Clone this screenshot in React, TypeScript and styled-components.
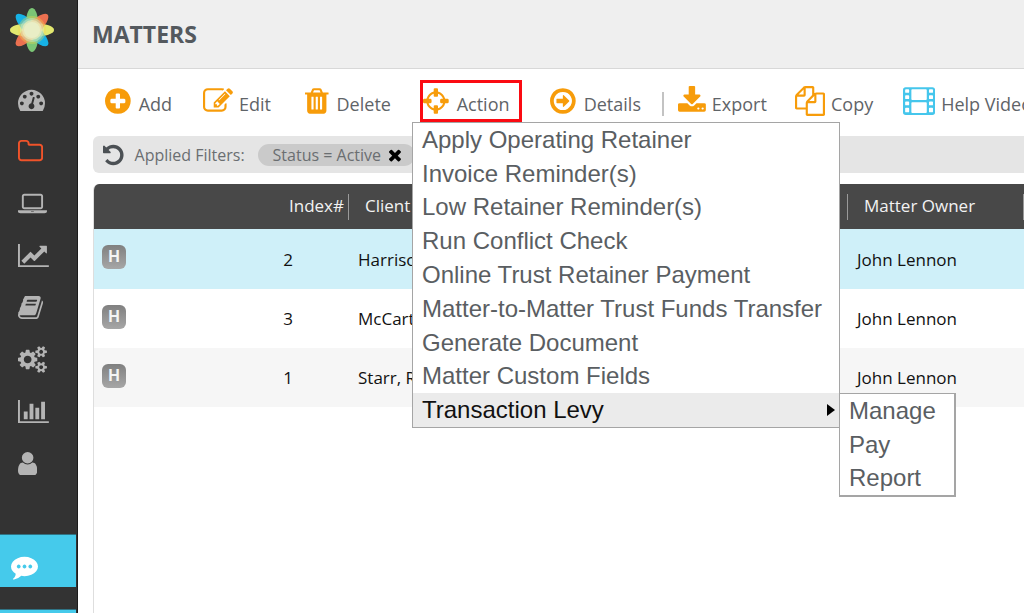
import React from "react";
import styled, { createGlobalStyle } from "styled-components";

const uiFont = `"Open Sans", "Noto Sans", sans-serif`;
const menuFont = `"Liberation Sans", Arial, sans-serif`;

const GlobalStyle = createGlobalStyle`
  *, *::before, *::after { box-sizing: border-box; }
  body { margin: 0; background: #fff; font-family: ${uiFont}; color: #111; overflow: hidden; }
  button { font: inherit; color: inherit; background: none; border: 0; padding: 0; margin: 0; cursor: pointer; }
  ul { list-style: none; margin: 0; padding: 0; }
`;

const GLYPHS = {
  dashboard: {
    box: "0 0 1792 1792",
    d: "M384 1152q0-53-37.5-90.5t-90.5-37.5-90.5 37.5-37.5 90.5 37.5 90.5 90.5 37.5 90.5-37.5 37.5-90.5zm192-448q0-53-37.5-90.5t-90.5-37.5-90.5 37.5-37.5 90.5 37.5 90.5 90.5 37.5 90.5-37.5 37.5-90.5zm428 481l101-382q6-26-7.5-48.5t-38.5-29.5-48 6.5-30 39.5l-101 382q-60 5-107 43.5t-63 98.5q-20 77 20 146t117 89 146-20 89-117q16-60-6-117t-72-91zm660-33q0-53-37.5-90.5t-90.5-37.5-90.5 37.5-37.5 90.5 37.5 90.5 90.5 37.5 90.5-37.5 37.5-90.5zm-640-640q0-53-37.5-90.5t-90.5-37.5-90.5 37.5-37.5 90.5 37.5 90.5 90.5 37.5 90.5-37.5 37.5-90.5zm448 192q0-53-37.5-90.5t-90.5-37.5-90.5 37.5-37.5 90.5 37.5 90.5 90.5 37.5 90.5-37.5 37.5-90.5zm320 448q0 261-141 483-19 29-54 29h-1402q-35 0-54-29-141-221-141-483 0-182 71-348t191-286 286-191 348-71 348 71 286 191 191 286 71 348z",
  },
  folder: {
    box: "64 0 1664 1792",
    d: "M1600 1312v-704q0-40-28-68t-68-28h-704q-40 0-68-28t-28-68v-64q0-40-28-68t-68-28h-320q-40 0-68 28t-28 68v960q0 40 28 68t68 28h1216q40 0 68-28t28-68zm128-704v704q0 92-66 158t-158 66h-1216q-92 0-158-66t-66-158v-960q0-92 66-158t158-66h320q92 0 158 66t66 158v32h672q92 0 158 66t66 158z",
  },
  laptop: {
    box: "0 0 1920 1792",
    d: "M416 1280q-66 0-113-47t-47-113v-704q0-66 47-113t113-47h1088q66 0 113 47t47 113v704q0 66-47 113t-113 47h-1088zm-32-864v704q0 13 9.5 22.5t22.5 9.5h1088q13 0 22.5-9.5t9.5-22.5v-704q0-13-9.5-22.5t-22.5-9.5h-1088q-13 0-22.5 9.5t-9.5 22.5zm1376 928h160v96q0 40-47 68t-113 28h-1600q-66 0-113-28t-47-68v-96h1760zm-720 96q16 0 16-16t-16-16h-160q-16 0-16 16t16 16h160z",
  },
  line: {
    box: "0 0 2048 1792",
    d: "M2048 1536v128h-2048v-1536h128v1408h1920zm-128-1248v435q0 21-19.5 29.5t-35.5-7.5l-121-121-633 633q-10 10-23 10t-23-10l-233-233-416 416-192-192 585-585q10-10 23-10t23 10l233 233 464-464-121-121q-16-16-7.5-35.5t29.5-19.5h435q14 0 23 9t9 23z",
  },
  book: {
    box: "64 0 1664 1792",
    d: "M1703 478q40 57 18 129l-275 906q-19 64-76.5 107.5t-122.5 43.5h-923q-77 0-148.5-53.5t-99.5-131.5q-24-67-2-127 0-4 3-27t4-37q1-8-3-21.5t-3-19.5q2-11 8-21t16.5-23.5 16.5-23.5q23-38 45-91.5t30-91.5q3-10 .5-30t-.5-28q3-11 17-28t17-23q21-36 42-92t25-90q1-9-2.5-32t.5-28q4-13 22-30.5t22-22.5q19-26 42.5-84.5t27.5-96.5q1-8-3-25.5t-2-26.5q2-8 9-18t18-23 17-21q8-12 16.5-30.5t15-35 16-36 19.5-32 26.5-23.5 36-11.5 47.5 5.5l-1 3q38-9 51-9h761q74 0 114 56t18 130l-274 906q-36 119-71.5 153.5t-128.5 34.5h-869q-27 0-38 15-11 16-1 43 24 70 144 70h923q29 0 56-15.5t35-41.5l300-987q7-22 5-57 38 15 59 43zm-1064 2q-4 13 2 22.5t20 9.5h608q13 0 25.5-9.5t16.5-22.5l21-64q4-13-2-22.5t-20-9.5h-608q-13 0-25.5 9.5t-16.5 22.5zm-83 256q-4 13 2 22.5t20 9.5h608q13 0 25.5-9.5t16.5-22.5l21-64q4-13-2-22.5t-20-9.5h-608q-13 0-25.5 9.5t-16.5 22.5z",
  },
  cogs: {
    box: "0 0 1920 1792",
    d: "M896 896q0-106-75-181t-181-75-181 75-75 181 75 181 181 75 181-75 75-181zm768 512q0-52-38-90t-90-38-90 38-38 90q0 53 37.5 90.5t90.5 37.5 90.5-37.5 37.5-90.5zm0-1024q0-52-38-90t-90-38-90 38-38 90q0 53 37.5 90.5t90.5 37.5 90.5-37.5 37.5-90.5zm-384 421v185q0 10-7 19.5t-16 10.5l-155 24q-11 35-32 76 34 48 90 115 7 11 7 20 0 12-7 19-23 30-82.5 89.5t-78.5 59.5q-11 0-21-7l-115-90q-37 19-77 31-11 108-23 155-7 24-30 24h-186q-11 0-20-7.5t-10-17.5l-23-153q-34-10-75-31l-118 89q-7 7-20 7-11 0-21-8-144-133-144-160 0-9 7-19 10-14 41-53t47-61q-23-44-35-82l-152-24q-10-1-17-9.5t-7-19.5v-185q0-10 7-19.5t16-10.5l155-24q11-35 32-76-34-48-90-115-7-11-7-20 0-12 7-20 22-30 82-89t79-59q11 0 21 7l115 90q34-18 77-32 11-108 23-154 7-24 30-24h186q11 0 20 7.5t10 17.5l23 153q34 10 75 31l118-89q8-7 20-7 11 0 21 8 144 133 144 160 0 9-7 19-12 16-42 54t-45 60q23 48 34 82l152 23q10 2 17 10.5t7 19.5zm640 533v140q0 16-149 31-12 27-30 52 51 113 51 138 0 4-4 7-122 71-124 71-8 0-46-47t-52-68q-20 2-30 2t-30-2q-14 21-52 68t-46 47q-2 0-124-71-4-3-4-7 0-25 51-138-18-25-30-52-149-15-149-31v-140q0-16 149-31 13-29 30-52-51-113-51-138 0-4 4-7 4-2 35-20t59-34 30-16q8 0 46 46.5t52 67.5q20-2 30-2t30 2q51-71 92-112l6-2q4 0 124 70 4 3 4 7 0 25-51 138 17 23 30 52 149 15 149 31zm0-1024v140q0 16-149 31-12 27-30 52 51 113 51 138 0 4-4 7-122 71-124 71-8 0-46-47t-52-68q-20 2-30 2t-30-2q-14 21-52 68t-46 47q-2 0-124-71-4-3-4-7 0-25 51-138-18-25-30-52-149-15-149-31v-140q0-16 149-31 13-29 30-52-51-113-51-138 0-4 4-7 4-2 35-20t59-34 30-16q8 0 46 46.5t52 67.5q20-2 30-2t30 2q51-71 92-112l6-2q4 0 124 70 4 3 4 7 0 25-51 138 17 23 30 52 149 15 149 31z",
  },
  bars: {
    box: "0 0 2048 1792",
    d: "M640 896v512h-256v-512h256zm384-512v1024h-256v-1024h256zm1024 1152v128h-2048v-1536h128v1408h1920zm-640-896v768h-256v-768h256zm384-384v1152h-256v-1152h256z",
  },
  user: {
    box: "256 0 1280 1792",
    d: "M1536 1399q0 109-62.5 187t-150.5 78h-854q-88 0-150.5-78t-62.5-187q0-85 8.5-160.5t31.5-152 58.5-131 94-89 134.5-34.5q131 128 313 128t313-128q76 0 134.5 34.5t94 89 58.5 131 31.5 152 8.5 160.5zm-256-887q0 159-112.5 271.5t-271.5 112.5-271.5-112.5-112.5-271.5 112.5-271.5 271.5-112.5 271.5 112.5 112.5 271.5z",
  },
  chat: {
    box: "0 0 1792 1792",
    d: "M640 896q0-53-37.5-90.5t-90.5-37.5-90.5 37.5-37.5 90.5 37.5 90.5 90.5 37.5 90.5-37.5 37.5-90.5zm384 0q0-53-37.5-90.5t-90.5-37.5-90.5 37.5-37.5 90.5 37.5 90.5 90.5 37.5 90.5-37.5 37.5-90.5zm384 0q0-53-37.5-90.5t-90.5-37.5-90.5 37.5-37.5 90.5 37.5 90.5 90.5 37.5 90.5-37.5 37.5-90.5zm384 0q0 174-120 321.5t-326 233-450 85.5q-110 0-211-18-173 173-435 229-52 10-86 13-12 1-22-6t-13-18q-4-15 20-37 5-5 23.5-21.5t25.5-23.5 23.5-25.5 24-31.5 20.5-37 20-48 14.5-57.5 12.5-72.5q-146-90-229.5-216.5t-83.5-269.5q0-174 120-321.5t326-233 450-85.5 450 85.5 326 233 120 321.5z",
  },
  plus: {
    box: "128 0 1536 1792",
    d: "M1344 960v-128q0-26-19-45t-45-19h-256v-256q0-26-19-45t-45-19h-128q-26 0-45 19t-19 45v256h-256q-26 0-45 19t-19 45v128q0 26 19 45t45 19h256v256q0 26 19 45t45 19h128q26 0 45-19t19-45v-256h256q26 0 45-19t19-45zm320-64q0 209-103 385.5t-279.5 279.5-385.5 103-385.5-103-279.5-279.5-103-385.5 103-385.5 279.5-279.5 385.5-103 385.5 103 279.5 279.5 103 385.5z",
  },
  edit: {
    box: "0 0 1792 1792",
    d: "M888 1184l116-116-152-152-116 116v56h96v96h56zm440-720q-16-16-33 1l-350 350q-17 17-1 33t33-1l350-350q17-17 1-33zm80 594v190q0 119-84.5 203.5t-203.5 84.5h-832q-119 0-203.5-84.5t-84.5-203.5v-832q0-119 84.5-203.5t203.5-84.5h832q63 0 117 25 15 7 18 23 3 17-9 29l-49 49q-14 14-32 8-23-6-45-6h-832q-66 0-113 47t-47 113v832q0 66 47 113t113 47h832q66 0 113-47t47-113v-126q0-13 9-22l64-64q15-15 35-7t20 29zm-96-738l288 288-672 672h-288v-288zm444 132l-92 92-288-288 92-92q28-28 68-28t68 28l152 152q28 28 28 68t-28 68z",
  },
  trash: {
    box: "192 0 1408 1792",
    d: "M704 1376v-704q0-14-9-23t-23-9h-64q-14 0-23 9t-9 23v704q0 14 9 23t23 9h64q14 0 23-9t9-23zm256 0v-704q0-14-9-23t-23-9h-64q-14 0-23 9t-9 23v704q0 14 9 23t23 9h64q14 0 23-9t9-23zm256 0v-704q0-14-9-23t-23-9h-64q-14 0-23 9t-9 23v704q0 14 9 23t23 9h64q14 0 23-9t9-23zm-544-992h448l-48-117q-7-9-17-11h-317q-10 2-17 11zm928 32v64q0 14-9 23t-23 9h-96v948q0 83-47 143.5t-113 60.5h-832q-66 0-113-58.5t-47-141.5v-952h-96q-14 0-23-9t-9-23v-64q0-14 9-23t23-9h309l70-167q15-37 54-63t79-26h320q40 0 79 26t54 63l70 167h309q14 0 23 9t9 23z",
  },
  target: {
    box: "128 0 1536 1792",
    d: "M1325 1024h-109q-26 0-45-19t-19-45v-128q0-26 19-45t45-19h109q-32-108-112.5-188.5t-188.5-112.5v109q0 26-19 45t-45 19h-128q-26 0-45-19t-19-45v-109q-108 32-188.5 112.5t-112.5 188.5h109q26 0 45 19t19 45v128q0 26-19 45t-45 19h-109q32 108 112.5 188.5t188.5 112.5v-109q0-26 19-45t45-19h128q26 0 45 19t19 45v109q108-32 188.5-112.5t112.5-188.5zm339-192v128q0 26-19 45t-45 19h-143q-37 161-154.5 278.5t-278.5 154.5v143q0 26-19 45t-45 19h-128q-26 0-45-19t-19-45v-143q-161-37-278.5-154.5t-154.5-278.5h-143q-26 0-45-19t-19-45v-128q0-26 19-45t45-19h143q37-161 154.5-278.5t278.5-154.5v-143q0-26 19-45t45-19h128q26 0 45 19t19 45v143q161 37 278.5 154.5t154.5 278.5h143q26 0 45 19t19 45z",
  },
  arrow: {
    box: "128 0 1536 1792",
    d: "M1280 896q0 14-9 23l-320 320q-9 9-23 9-13 0-22.5-9.5t-9.5-22.5v-192h-352q-13 0-22.5-9.5t-9.5-22.5v-192q0-13 9.5-22.5t22.5-9.5h352v-192q0-14 9-23t23-9q12 0 24 10l319 319q9 9 9 23zm160 0q0-148-73-273t-198-198-273-73-273 73-198 198-73 273 73 273 198 198 273 73 273-73 198-198 73-273zm224 0q0 209-103 385.5t-279.5 279.5-385.5 103-385.5-103-279.5-279.5-103-385.5 103-385.5 279.5-279.5 385.5-103 385.5 103 279.5 279.5 103 385.5z",
  },
  download: {
    box: "64 0 1664 1792",
    d: "M1344 1344q0-26-19-45t-45-19-45 19-19 45 19 45 45 19 45-19 19-45zm256 0q0-26-19-45t-45-19-45 19-19 45 19 45 45 19 45-19 19-45zm128-224v320q0 40-28 68t-68 28h-1472q-40 0-68-28t-28-68v-320q0-40 28-68t68-28h465l135 136q58 56 136 56t136-56l136-136h464q40 0 68 28t28 68zm-325-569q17 41-14 70l-448 448q-18 19-45 19t-45-19l-448-448q-31-29-14-70 17-39 59-39h256v-448q0-26 19-45t45-19h256q26 0 45 19t19 45v448h256q42 0 59 39z",
  },
  copy: {
    box: "0 0 1792 1792",
    d: "M1696 384q40 0 68 28t28 68v1216q0 40-28 68t-68 28h-960q-40 0-68-28t-28-68v-288h-544q-40 0-68-28t-28-68v-672q0-40 20-88t48-76l408-408q28-28 76-48t88-20h416q40 0 68 28t28 68v328q68-40 128-40h416zm-544 213l-299 299h299v-299zm-640-384l-299 299h299v-299zm196 647l316-316v-416h-384v416q0 40-28 68t-68 28h-416v640h512v-256q0-40 20-88t48-76zm956 804v-1152h-384v416q0 40-28 68t-68 28h-416v640h896z",
  },
  film: {
    box: "0 0 1920 1792",
    d: "M160 80h1600q160 0 160 160v1328q0 160-160 160h-1600q-160 0-160-160v-1328q0-160 160-160zM128 240v120q0 50 50 50h140q50 0 50-50v-120q0-50-50-50h-140q-50 0-50 50zm0 362v130q0 50 50 50h140q50 0 50-50v-130q0-50-50-50h-140q-50 0-50 50zm0 372v130q0 50 50 50h140q50 0 50-50v-130q0-50-50-50h-140q-50 0-50 50zm0 372v170q0 50 50 50h140q50 0 50-50v-170q0-50-50-50h-140q-50 0-50 50zM1552 240v120q0 50 50 50h140q50 0 50-50v-120q0-50-50-50h-140q-50 0-50 50zm0 362v130q0 50 50 50h140q50 0 50-50v-130q0-50-50-50h-140q-50 0-50 50zm0 372v130q0 50 50 50h140q50 0 50-50v-130q0-50-50-50h-140q-50 0-50 50zm0 372v170q0 50 50 50h140q50 0 50-50v-170q0-50-50-50h-140q-50 0-50 50zM500 250v530q0 50 50 50h820q50 0 50-50v-530q0-50-50-50h-820q-50 0-50 50zM500 1020v540q0 50 50 50h820q50 0 50-50v-540q0-50-50-50h-820q-50 0-50 50z",
  },
  undo: {
    box: "128 0 1536 1792",
    d: "M1664 896q0 156-61 298t-164 245-245 164-298 61q-172 0-327-72.5t-264-204.5q-7-10-6.5-22.5t8.5-20.5l137-138q10-9 25-9 16 2 23 12 73 95 179 147t225 52q104 0 198.5-40.5t163.5-109.5 109.5-163.5 40.5-198.5-40.5-198.5-109.5-163.5-163.5-109.5-198.5-40.5q-98 0-188 35.5t-160 101.5l137 138q31 30 14 69-17 40-59 40h-448q-26 0-45-19t-19-45v-448q0-42 40-59 39-17 69 14l130 129q107-101 244.5-156.5t284.5-55.5q156 0 298 61t245 164 164 245 61 298z",
  },
  times: {
    box: "302 0 1188 1792",
    d: "M1490 1322q0 40-28 68l-136 136q-28 28-68 28t-68-28l-294-294-294 294q-28 28-68 28t-68-28l-136-136q-28-28-28-68t28-68l294-294-294-294q-28-28-28-68t28-68l136-136q28-28 68-28t68 28l294 294 294-294q28-28 68-28t68 28l136 136q28 28 28 68t-28 68l-294 294 294 294q28 28 28 68z",
  },
};

type GlyphName = keyof typeof GLYPHS;

const Svg = styled.svg<{ $size: number; $color?: string }>`
  display: block;
  flex: none;
  height: ${(p) => p.$size}px;
  fill: ${(p) => p.$color ?? "currentColor"};
`;

const Icon = ({ name, size, color }: { name: GlyphName; size: number; color?: string }) => (
  <Svg $size={size} $color={color} viewBox={GLYPHS[name].box} aria-hidden="true">
    <path d={GLYPHS[name].d} fillRule="evenodd" />
  </Svg>
);

const Shell = styled.div`
  display: flex;
  height: 100vh;
  overflow: hidden;
`;

const Sidebar = styled.nav`
  flex: none;
  width: 78px;
  display: flex;
  flex-direction: column;
  background: #333;
  border-right: 1px solid #1c1c1c;
  overflow: hidden;
`;

const LogoLink = styled.a`
  display: block;
  flex: none;
  height: 73px;
  padding: 7px 9px;
`;

const NavList = styled.ul`
  flex: none;
`;

const NavButton = styled.button<{ $active?: boolean }>`
  display: flex;
  align-items: center;
  width: 100%;
  height: 52px;
  padding-left: 18px;
  color: ${(p) => (p.$active ? "#f0532a" : "#b4b4b4")};
`;

const ChatArea = styled.div`
  flex: none;
  display: flex;
  flex-direction: column;
  gap: 22px;
  margin-top: 45px;
`;

const ChatButton = styled.button`
  display: flex;
  align-items: center;
  width: 76px;
  height: 53px;
  padding: 11px 0 0 11px;
  color: #fff;
  background: #45caeb;
  border-top: 1px solid #2f7384;
`;

const Main = styled.main`
  flex: 1;
  min-width: 0;
  display: flex;
  flex-direction: column;
  overflow: hidden;
`;

const PageHeader = styled.header`
  flex: none;
  height: 69px;
  padding: 18px 14px 0;
  background: #efefef;
  border-bottom: 1px solid #d8d8d8;
`;

const Title = styled.h1`
  margin: 0;
  font: 700 23px/32px "Open Sans", sans-serif;
  color: #54595e;
`;

const Toolbar = styled.div`
  flex: none;
  display: flex;
  align-items: flex-start;
  padding: 11px 0 14px 27px;
  color: #5f6468;
  font-size: 18px;
`;

const Tool = styled.button<{ $width: number; $gap?: number }>`
  flex: none;
  display: flex;
  align-items: center;
  gap: ${(p) => p.$gap ?? 8}px;
  width: ${(p) => p.$width}px;
  height: 42px;
  white-space: nowrap;
`;

const ToolLabel = styled.span`
  padding-top: 5px;
  line-height: 24px;
`;

const ActionGroup = styled.div`
  position: relative;
  flex: none;
  margin-right: 28px;
`;

const ActionTool = styled(Tool)`
  border: 3px solid #fb0b12;
`;

const Divider = styled.span`
  flex: none;
  width: 2px;
  height: 24px;
  margin: 12px 14px 0 0;
  background: #c3c3c3;
`;

const Menu = styled.ul<{ $sub?: boolean }>`
  position: absolute;
  z-index: ${(p) => (p.$sub ? 3 : 2)};
  top: ${(p) => (p.$sub ? "0" : "100%")};
  left: ${(p) => (p.$sub ? "100%" : "-8px")};
  width: ${(p) => (p.$sub ? 117 : 428)}px;
  height: ${(p) => (p.$sub ? 104 : 306)}px;
  display: grid;
  grid-auto-rows: 1fr;
  background: #fff;
  border: 1px solid #a5a5a5;
  ${(p) => p.$sub && "border-right-width: 2px; border-bottom-width: 2px;"}
  font-family: ${menuFont};
  font-size: 24px;
`;

const MenuItem = styled.li<{ $open?: boolean }>`
  position: relative;
  display: flex;
  background: ${(p) => (p.$open ? "#ebebeb" : "transparent")};
  color: ${(p) => (p.$open ? "#111" : "#5a5e62")};
`;

const MenuButton = styled.button`
  flex: 1;
  display: flex;
  align-items: center;
  justify-content: space-between;
  padding: 0 4px 0 9px;
  line-height: 32px;
  white-space: nowrap;
  text-align: left;
`;

const SubArrow = styled.svg`
  width: 8px;
  height: 12px;
`;

const Content = styled.div`
  flex: 1;
  display: flex;
  flex-direction: column;
  min-height: 0;
  padding-left: 15px;
`;

const FilterBar = styled.div`
  flex: none;
  display: flex;
  align-items: center;
  height: 37px;
  padding-left: 10px;
  margin-bottom: 11px;
  background: #e5e5e5;
  border-radius: 6px 0 0 6px;
  color: #6a6e71;
  font-size: 16px;
  white-space: nowrap;
`;

const FilterLabel = styled.span`
  width: 123px;
  margin-left: 11px;
`;

const FilterChip = styled.span`
  display: flex;
  align-items: center;
  gap: 8px;
  height: 22px;
  padding: 0 14px 0 15px;
  border-radius: 11px;
  background: #cacaca;
`;

const IconButton = styled.button`
  display: flex;
  align-items: center;
  flex: none;
`;

const GridPanel = styled.div`
  flex: 1;
  border-left: 1px solid #dedede;
  border-top-left-radius: 6px;
  overflow: hidden;
`;

const Table = styled.table`
  width: 100%;
  table-layout: fixed;
  border-collapse: collapse;
  font-size: 17px;
`;

const HeadCell = styled.th<{ $align?: string }>`
  height: 45px;
  padding: 0;
  background: #484848;
  color: #f2f2f2;
  font-weight: 400;
  text-align: ${(p) => p.$align ?? "left"};
`;

const HeadLabel = styled.span`
  display: block;
  height: 26px;
  padding: 0 4px 0 16px;
  line-height: 24px;
  border-right: 1px solid #9a9a9a;
`;

const Row = styled.tr<{ $selected?: boolean }>`
  height: ${(p) => (p.$selected ? 60 : 59)}px;
  background: ${(p) => (p.$selected ? "#cff0f9" : "#fff")};
  &:nth-child(3) {
    background: #f6f6f6;
  }
`;

const Cell = styled.td<{ $align?: string }>`
  padding: ${(p) => (p.$align === "right" ? "0 56px 0 0" : "0 0 0 9px")};
  text-align: ${(p) => p.$align ?? "left"};
  white-space: nowrap;
  overflow: hidden;
`;

const BadgeCell = styled.td`
  padding: 0 0 4px 8px;
`;

const Badge = styled.span`
  display: flex;
  align-items: center;
  justify-content: center;
  width: 24px;
  height: 24px;
  border-radius: 6px;
  background: linear-gradient(#808080, #a6a6a6);
  color: #f4f4f4;
  font: 700 16px/24px "Liberation Sans", sans-serif;
`;

const Logo = () => (
  <svg width="46" height="46" viewBox="-23 -23 46 46" role="img" aria-label="Home">
    <ellipse rx="7" ry="22" fill="#7cc576" />
    <ellipse rx="22" ry="7" fill="#e3e86f" />
    <ellipse rx="22" ry="7" fill="#14bdf5" fillOpacity="0.92" transform="rotate(45)" />
    <ellipse rx="22" ry="7" fill="#fb7553" fillOpacity="0.92" transform="rotate(-45)" />
    <ellipse rx="7" ry="22" fill="#7cc576" fillOpacity="0.35" />
    <ellipse rx="22" ry="7" fill="#e3e86f" fillOpacity="0.35" />
    <circle r="14" fill="#f5d64f" fillOpacity="0.35" />
    <circle r="12" fill="#d5f0e0" fillOpacity="0.4" />
    <circle r="10" fill="#efedbd" fillOpacity="0.7" />
    <circle r="8" fill="#e9eec6" />
  </svg>
);

const NAV: { icon: GlyphName; label: string }[] = [
  { icon: "dashboard", label: "Dashboard" },
  { icon: "folder", label: "Matters" },
  { icon: "laptop", label: "Workspace" },
  { icon: "line", label: "Trends" },
  { icon: "book", label: "Ledger" },
  { icon: "cogs", label: "Settings" },
  { icon: "bars", label: "Charts" },
  { icon: "user", label: "Account" },
];

const ACTIONS = [
  "Apply Operating Retainer",
  "Invoice Reminder(s)",
  "Low Retainer Reminder(s)",
  "Run Conflict Check",
  "Online Trust Retainer Payment",
  "Matter-to-Matter Trust Funds Transfer",
  "Generate Document",
  "Matter Custom Fields",
];

const LEVY_ACTIONS = ["Manage", "Pay", "Report"];

const MATTERS = [
  { index: 2, client: "Harrison", owner: "John Lennon", selected: true },
  { index: 3, client: "McCartney", owner: "John Lennon", selected: false },
  { index: 1, client: "Starr, R", owner: "John Lennon", selected: false },
];

const ORANGE = "#f79c0a";

export default function App() {
  return (
    <Shell>
      <GlobalStyle />
      <Sidebar aria-label="Main">
        <LogoLink href="#">
          <Logo />
        </LogoLink>
        <NavList>
          {NAV.map((n) => (
            <li key={n.icon}>
              <NavButton aria-label={n.label} $active={n.icon === "folder"}>
                <Icon name={n.icon} size={27} />
              </NavButton>
            </li>
          ))}
        </NavList>
        <ChatArea>
          <ChatButton aria-label="Chat">
            <Icon name="chat" size={27} />
          </ChatButton>
          <ChatButton aria-label="Help" />
        </ChatArea>
      </Sidebar>
      <Main>
        <PageHeader>
          <Title>MATTERS</Title>
        </PageHeader>
        <Toolbar>
          <Tool $width={98}>
            <Icon name="plus" size={30} color={ORANGE} />
            <ToolLabel>Add</ToolLabel>
          </Tool>
          <Tool $width={102} $gap={6}>
            <Icon name="edit" size={30} color={ORANGE} />
            <ToolLabel>Edit</ToolLabel>
          </Tool>
          <Tool $width={115}>
            <Icon name="trash" size={30} color={ORANGE} />
            <ToolLabel>Delete</ToolLabel>
          </Tool>
          <ActionGroup>
            <ActionTool $width={102} aria-haspopup="menu" aria-expanded="true">
              <Icon name="target" size={30} color={ORANGE} />
              <ToolLabel>Action</ToolLabel>
            </ActionTool>
            <Menu>
              {ACTIONS.map((a) => (
                <MenuItem key={a}>
                  <MenuButton>{a}</MenuButton>
                </MenuItem>
              ))}
              <MenuItem $open>
                <MenuButton aria-haspopup="menu" aria-expanded="true">
                  Transaction Levy
                  <SubArrow viewBox="0 0 8 12" aria-hidden="true">
                    <path d="M0 0l8 6-8 6z" />
                  </SubArrow>
                </MenuButton>
                <Menu $sub>
                  {LEVY_ACTIONS.map((a) => (
                    <MenuItem key={a}>
                      <MenuButton>{a}</MenuButton>
                    </MenuItem>
                  ))}
                </Menu>
              </MenuItem>
            </Menu>
          </ActionGroup>
          <Tool $width={112}>
            <Icon name="arrow" size={30} color={ORANGE} />
            <ToolLabel>Details</ToolLabel>
          </Tool>
          <Divider />
          <Tool $width={117} $gap={6}>
            <Icon name="download" size={30} color={ORANGE} />
            <ToolLabel>Export</ToolLabel>
          </Tool>
          <Tool $width={108} $gap={6}>
            <Icon name="copy" size={30} color={ORANGE} />
            <ToolLabel>Copy</ToolLabel>
          </Tool>
          <Tool $width={140} $gap={6}>
            <Icon name="film" size={30} color="#45c6ec" />
            <ToolLabel>Help Videos</ToolLabel>
          </Tool>
        </Toolbar>
        <Content>
          <FilterBar>
            <IconButton aria-label="Reset filters">
              <Icon name="undo" size={24} color="#4b5054" />
            </IconButton>
            <FilterLabel>Applied Filters:</FilterLabel>
            <FilterChip>
              Status = Active
              <IconButton aria-label="Remove filter">
                <Icon name="times" size={18} color="#000" />
              </IconButton>
            </FilterChip>
          </FilterBar>
          <GridPanel>
            <Table>
              <colgroup>
                <col width="45" />
                <col width="210" />
                <col width="499" />
                <col width="176" />
                <col />
              </colgroup>
              <thead>
                <tr>
                  <HeadCell />
                  <HeadCell $align="right">
                    <HeadLabel>Index#</HeadLabel>
                  </HeadCell>
                  <HeadCell>
                    <HeadLabel>Client</HeadLabel>
                  </HeadCell>
                  <HeadCell>
                    <HeadLabel>Matter Owner</HeadLabel>
                  </HeadCell>
                  <HeadCell />
                </tr>
              </thead>
              <tbody>
                {MATTERS.map((m) => (
                  <Row key={m.index} $selected={m.selected}>
                    <BadgeCell>
                      <Badge>H</Badge>
                    </BadgeCell>
                    <Cell $align="right">{m.index}</Cell>
                    <Cell>{m.client}</Cell>
                    <Cell>{m.owner}</Cell>
                    <Cell />
                  </Row>
                ))}
              </tbody>
            </Table>
          </GridPanel>
        </Content>
      </Main>
    </Shell>
  );
}
